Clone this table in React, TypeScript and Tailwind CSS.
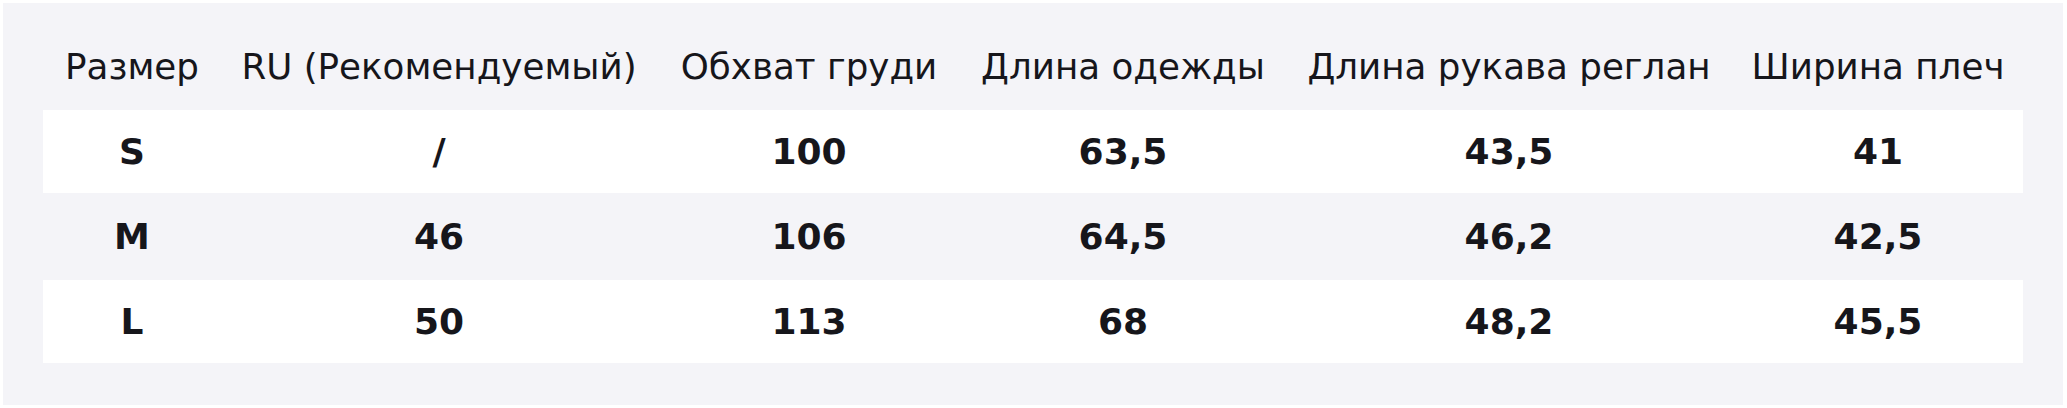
const headers = [
  'Размер',
  'RU (Рекомендуемый)',
  'Обхват груди',
  'Длина одежды',
  'Длина рукава реглан',
  'Ширина плеч',
];

const rows = [
  { cells: ['S', '/', '100', '63,5', '43,5', '41'], white: true, h: 'h-[83px]' },
  { cells: ['M', '46', '106', '64,5', '46,2', '42,5'], white: false, h: 'h-[87px]' },
  { cells: ['L', '50', '113', '68', '48,2', '45,5'], white: true, h: 'h-[83px]' },
];

const cols = 'grid grid-cols-[178px_436px_304px_324px_448px_1fr]';

export default function App() {
  return (
    <div className="w-[2067px] h-[408px] bg-white pt-[3px] pl-[3px] pr-[4px] pb-[3px]">
      <div
        className="h-full bg-[#f4f4f8] px-[40px] text-[#16161b]"
        style={{ fontFamily: '"DejaVu Sans", Verdana, sans-serif' }}
      >
        <div className={`${cols} h-[107px] items-end pb-[22px]`}>
          {headers.map((h) => (
            <div key={h} className="text-center text-[35.7px] leading-[42px] whitespace-nowrap">
              {h}
            </div>
          ))}
        </div>
        {rows.map((r, i) => (
          <div
            key={i}
            className={`${cols} ${r.h} items-center ${r.white ? 'bg-white' : 'bg-[#f4f4f8]'}`}
          >
            {r.cells.map((c, j) => (
              <div key={j} className="text-center text-[36px] leading-[42px] font-bold">
                {c}
              </div>
            ))}
          </div>
        ))}
      </div>
    </div>
  );
}
